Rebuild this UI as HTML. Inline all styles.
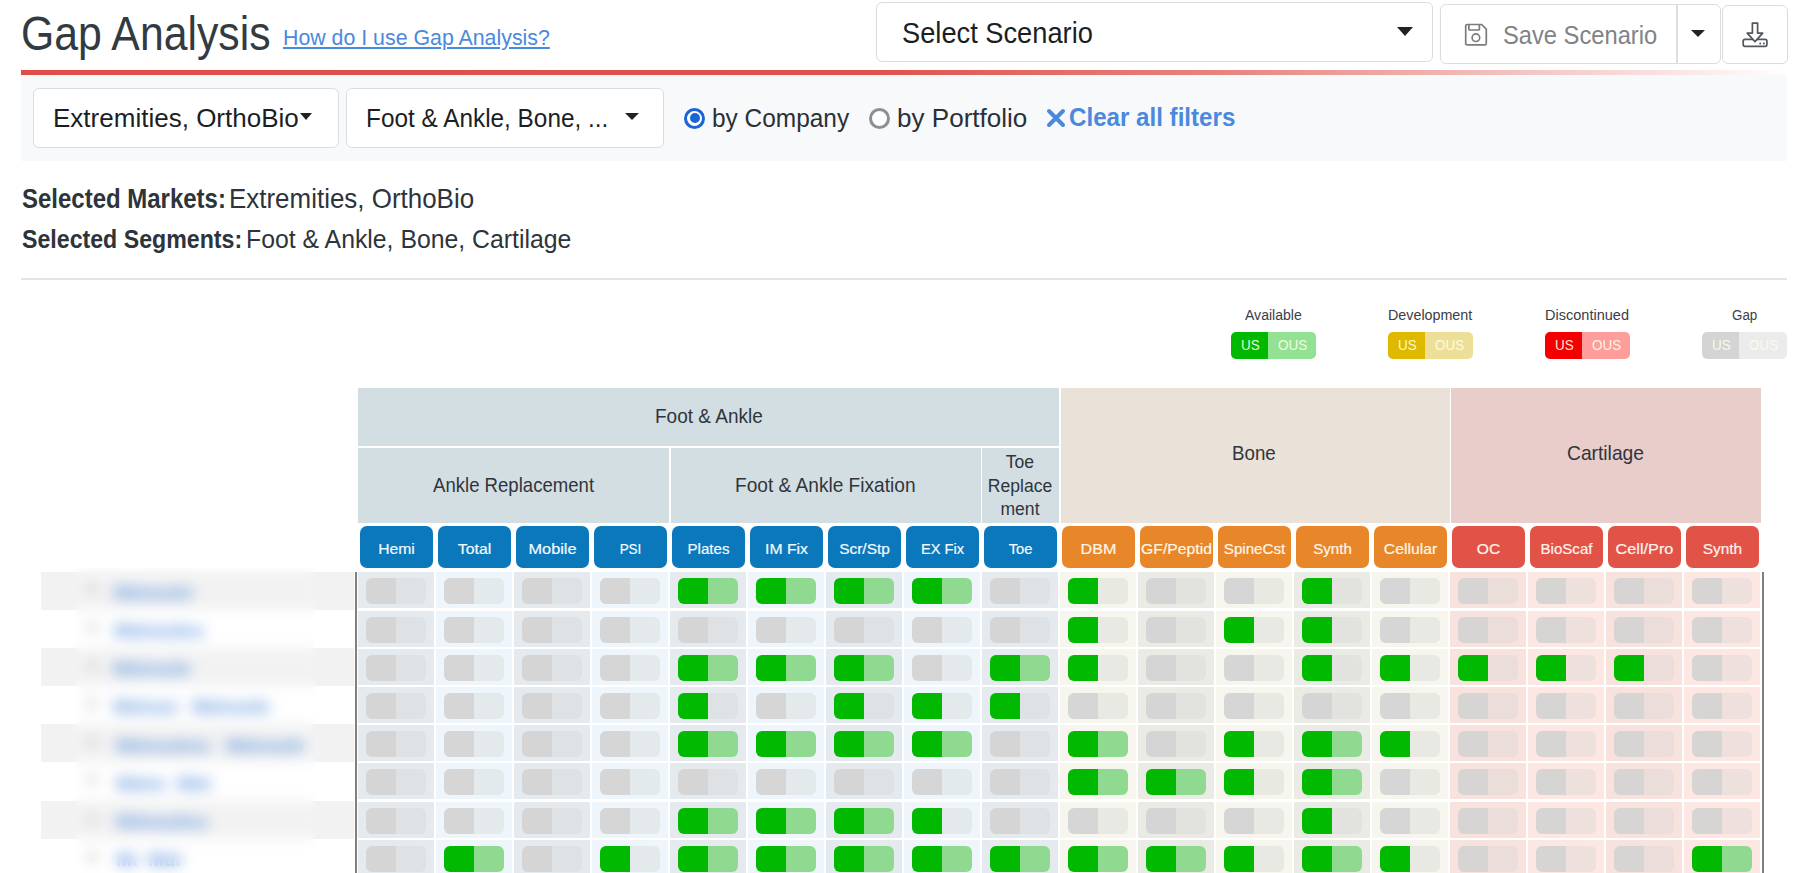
<!DOCTYPE html>
<html><head><meta charset="utf-8">
<style>
*{margin:0;padding:0;box-sizing:border-box}
html,body{width:1800px;height:873px;overflow:hidden;background:#fff}
body{font-family:"Liberation Sans",sans-serif;color:#212529;position:relative}
.a{position:absolute;white-space:nowrap;transform-origin:0 0}
.box{position:absolute;background:#fff;border:1.5px solid #dadcde;border-radius:6px}
.caret{position:absolute;width:0;height:0;border-left:7px solid transparent;border-right:7px solid transparent;border-top:7px solid #222}
.radio{position:absolute;width:21px;height:21px;border-radius:50%}
.badge{position:absolute;width:85px;height:27px;border-radius:5px;overflow:hidden}
.badge i{position:absolute;top:0;height:27px;display:block}
.badge b{position:absolute;top:0;font-weight:normal;font-size:14.5px;line-height:27px;color:rgba(250,255,235,.92);transform-origin:0 0}
.hdr{position:absolute}
.pill{position:absolute;height:42px;width:73px;border-radius:7px}
.pl{position:absolute;left:0;width:73px;top:0;text-align:center;color:#fff;font-size:15px;line-height:15px;-webkit-text-stroke:.2px currentColor}
.cell{position:absolute;width:76px;height:36px}
.tg{position:absolute;left:8px;top:6px;width:60px;height:26px;border-radius:6px;overflow:hidden}
.tg i{position:absolute;top:0;height:26px;width:30px;display:block}
.tg i+i{left:30px}
</style></head><body>
<div class="a" id="t_title" style="left:20.50px;top:10.00px;font-size:47.24px;line-height:47.24px;transform:scaleX(0.9055);color:#333b42">Gap Analysis</div>
<div class="a" id="t_help" style="left:283.10px;top:26.82px;font-size:21.95px;line-height:21.95px;transform:scaleX(0.9725);color:#4a89dc;text-decoration:underline;text-underline-offset:2px">How do I use Gap Analysis?</div>
<div class="box" style="left:876px;top:2px;width:557px;height:60px"></div>
<div class="a" id="t_selscen" style="left:902.26px;top:17.74px;font-size:29.36px;line-height:29.36px;transform:scaleX(0.9281);color:#1b1f24">Select Scenario</div>
<div class="caret" style="left:1397px;top:27px;border-left-width:8px;border-right-width:8px;border-top-width:9px"></div>
<div class="box" style="left:1440px;top:4px;width:281px;height:60px"></div>
<div class="a" style="left:1676px;top:5px;width:1.5px;height:58px;background:#dcdfe3"></div>
<svg class="a" style="left:1463px;top:22px" width="26" height="26" viewBox="0 0 26 26"><path d="M4.2 2.5H18.6L23.3 7.2V21.4a1.5 1.5 0 0 1-1.5 1.5H4.2a1.5 1.5 0 0 1-1.5-1.5V4a1.5 1.5 0 0 1 1.5-1.5z" fill="none" stroke="#7b7b7b" stroke-width="1.7" stroke-linejoin="round"/><path d="M5.9 2.5V7.2a.8.8 0 0 0 .8.8H15.6a.8.8 0 0 0 .8-.8V2.5" fill="none" stroke="#7b7b7b" stroke-width="1.7"/><circle cx="12.9" cy="15.7" r="3.8" fill="none" stroke="#7b7b7b" stroke-width="1.6"/></svg>
<div class="a" id="t_savescen" style="left:1503.18px;top:21.87px;font-size:26.02px;line-height:26.02px;transform:scaleX(0.9113);color:#808386">Save Scenario</div>
<div class="caret" style="left:1691px;top:30px"></div>
<div class="box" style="left:1722px;top:5px;width:66px;height:59px"></div>
<svg class="a" style="left:1741px;top:21px" width="28" height="28" viewBox="0 0 28 28"><rect x="2.2" y="18.3" width="23.7" height="7" rx="1.8" fill="none" stroke="#52575c" stroke-width="1.7"/><path d="M11.4 2.1H16.6V12.1H21.7L14 20.6L6.2 12.1H11.4Z" fill="#fff" stroke="#52575c" stroke-width="1.7" stroke-linejoin="round"/><circle cx="19.2" cy="22.4" r="1" fill="#52575c"/><circle cx="22.9" cy="22.4" r="1" fill="#52575c"/></svg>
<div class="a" style="left:21px;top:69.5px;width:1766px;height:5.5px;background:linear-gradient(90deg,#df4f47 0%,#e0524b 48%,#e8837e 68%,#f1b9b7 82%,#f9e2e1 93%,rgba(255,255,255,0) 100%)"></div>
<div class="a" style="left:21px;top:75px;width:1766px;height:86px;background:#f8f9fa"></div>
<div class="box" style="left:33px;top:88px;width:306px;height:60px"></div>
<div class="a" id="t_dd1" style="left:53.40px;top:104.83px;font-size:26.31px;line-height:26.31px;transform:scaleX(0.9894);color:#1b1f24">Extremities, OrthoBio</div>
<div class="caret" style="left:300px;top:113px;border-left-width:6.7px;border-right-width:6.7px"></div>
<div class="box" style="left:346px;top:88px;width:318px;height:60px"></div>
<div class="a" id="t_dd2" style="left:366.46px;top:104.80px;font-size:26.45px;line-height:26.45px;transform:scaleX(0.9212);color:#1b1f24">Foot &amp; Ankle, Bone, ...</div>
<div class="caret" style="left:625px;top:113px"></div>
<div class="radio" style="left:684px;top:107.5px;border:3px solid #1a63d8;background:#fff"><div style="position:absolute;left:2.5px;top:2.5px;width:10px;height:10px;border-radius:50%;background:#1a63d8"></div></div>
<div class="a" id="t_bycomp" style="left:712.26px;top:104.85px;font-size:26.16px;line-height:26.16px;transform:scaleX(0.9341);color:#2a3038">by Company</div>
<div class="radio" style="left:869px;top:107.5px;border:3px solid #8d8f92;background:#fff"></div>
<div class="a" id="t_byport" style="left:897.28px;top:104.85px;font-size:26.16px;line-height:26.16px;transform:scaleX(0.9963);color:#2a3038">by Portfolio</div>
<svg class="a" style="left:1046px;top:108px" width="20" height="20" viewBox="0 0 20 20"><path d="M3 3L17 17M17 3L3 17" stroke="#4a89dc" stroke-width="4" stroke-linecap="round"/></svg>
<div class="a" id="t_clear" style="left:1069.20px;top:105.24px;font-size:25.58px;line-height:25.58px;transform:scaleX(0.9436);color:#4a89dc;font-weight:bold">Clear all filters</div>
<div class="a" id="t_selmk" style="left:21.94px;top:185.73px;font-size:26.89px;line-height:26.89px;transform:scaleX(0.8923);color:#2d343a;font-weight:bold">Selected Markets:</div>
<div class="a" id="t_selsg" style="left:21.94px;top:227.09px;font-size:25.87px;line-height:25.87px;transform:scaleX(0.8957);color:#2d343a;font-weight:bold">Selected Segments:</div>
<div class="a" id="t_selmk2" style="left:229.38px;top:185.73px;font-size:26.89px;line-height:26.89px;transform:scaleX(0.9653);color:#2d343a">Extremities, OrthoBio</div>
<div class="a" id="t_selsg2" style="left:245.72px;top:227.09px;font-size:25.87px;line-height:25.87px;transform:scaleX(0.9591);color:#2d343a">Foot &amp; Ankle, Bone, Cartilage</div>
<div class="a" style="left:21px;top:278px;width:1766px;height:2px;background:#e3e3e3"></div>
<div class="a" id="t_lg0" style="left:1245.02px;top:308.99px;font-size:13.95px;line-height:13.95px;transform:scaleX(1.0078);color:#3a4047">Available</div>
<div class="badge" style="left:1231px;top:332px"><i style="left:0;width:37px;background:#00b900"></i><i style="left:37px;width:48px;background:#93e293"></i><b style="left:10px;transform:scaleX(.93)">US</b><b style="left:47px;transform:scaleX(.93)">OUS</b></div>
<div class="a" id="t_lg1" style="left:1388.20px;top:308.99px;font-size:13.95px;line-height:13.95px;transform:scaleX(1.0258);color:#3a4047">Development</div>
<div class="badge" style="left:1388px;top:332px"><i style="left:0;width:37px;background:#dfb900"></i><i style="left:37px;width:48px;background:#eedf98"></i><b style="left:10px;transform:scaleX(.93)">US</b><b style="left:47px;transform:scaleX(.93)">OUS</b></div>
<div class="a" id="t_lg2" style="left:1545.30px;top:308.99px;font-size:13.95px;line-height:13.95px;transform:scaleX(1.0421);color:#3a4047">Discontinued</div>
<div class="badge" style="left:1545px;top:332px"><i style="left:0;width:37px;background:#f50000"></i><i style="left:37px;width:48px;background:#ff9c9c"></i><b style="left:10px;transform:scaleX(.93)">US</b><b style="left:47px;transform:scaleX(.93)">OUS</b></div>
<div class="a" id="t_lg3" style="left:1732.10px;top:308.99px;font-size:13.95px;line-height:13.95px;transform:scaleX(0.9577);color:#3a4047">Gap</div>
<div class="badge" style="left:1702px;top:332px"><i style="left:0;width:37px;background:#d4d4d4"></i><i style="left:37px;width:48px;background:#ebebeb"></i><b style="left:10px;transform:scaleX(.93)">US</b><b style="left:47px;transform:scaleX(.93)">OUS</b></div>
<div class="hdr" style="left:358px;top:387.5px;width:701px;height:58.5px;background:#d3dee3"></div>
<div class="hdr" style="left:358px;top:448px;width:310.5px;height:74.5px;background:#d3dee3"></div>
<div class="hdr" style="left:670.5px;top:448px;width:310.5px;height:74.5px;background:#d3dee3"></div>
<div class="hdr" style="left:982px;top:448px;width:77px;height:74.5px;background:#d3dee3"></div>
<div class="hdr" style="left:1060.5px;top:387.5px;width:389.1px;height:135px;background:#eae1d9"></div>
<div class="hdr" style="left:1451px;top:387.5px;width:310.3px;height:135px;background:#e8cdcb"></div>
<div class="a" id="t_h_fa" style="left:655.20px;top:407.16px;font-size:19.77px;line-height:19.77px;transform:scaleX(0.9619);color:#2f353b">Foot &amp; Ankle</div>
<div class="a" id="t_h_ar" style="left:433.06px;top:476.09px;font-size:19.62px;line-height:19.62px;transform:scaleX(0.9471);color:#2f353b">Ankle Replacement</div>
<div class="a" id="t_h_faf" style="left:735.32px;top:476.09px;font-size:19.62px;line-height:19.62px;transform:scaleX(0.9742);color:#2f353b">Foot &amp; Ankle Fixation</div>
<div class="a" id="t_h_bone" style="left:1232.34px;top:444.39px;font-size:19.62px;line-height:19.62px;transform:scaleX(0.9545);color:#2f353b">Bone</div>
<div class="a" id="t_h_cart" style="left:1567.24px;top:444.39px;font-size:19.62px;line-height:19.62px;transform:scaleX(0.9810);color:#2f353b">Cartilage</div>
<div class="a" style="left:982px;width:76px;text-align:center;top:452.7px;font-size:18.3px;line-height:18.3px;color:#2f353b;transform:scaleX(.96);transform-origin:38px 0">Toe</div>
<div class="a" style="left:982px;width:76px;text-align:center;top:476.8px;font-size:18.3px;line-height:18.3px;color:#2f353b;transform:scaleX(.96);transform-origin:38px 0">Replace</div>
<div class="a" style="left:982px;width:76px;text-align:center;top:500.3px;font-size:18.3px;line-height:18.3px;color:#2f353b;transform:scaleX(.96);transform-origin:38px 0">ment</div>
<div class="pill" style="left:360px;top:526px;background:#0c78bc"><div class="pl" style="top:14.5px;transform:scaleX(1.048);transform-origin:36.5px 0;color:#f4fbff">Hemi</div></div>
<div class="pill" style="left:438px;top:526px;background:#0c78bc"><div class="pl" style="top:14.5px;transform:scaleX(1.053);transform-origin:36.5px 0;color:#f4fbff">Total</div></div>
<div class="pill" style="left:516px;top:526px;background:#0c78bc"><div class="pl" style="top:14.5px;transform:scaleX(1.088);transform-origin:36.5px 0;color:#f4fbff">Mobile</div></div>
<div class="pill" style="left:594px;top:526px;background:#0c78bc"><div class="pl" style="top:14.5px;transform:scaleX(0.898);transform-origin:36.5px 0;color:#f4fbff">PSI</div></div>
<div class="pill" style="left:672px;top:526px;background:#0c78bc"><div class="pl" style="top:14.5px;transform:scaleX(1.005);transform-origin:36.5px 0;color:#f4fbff">Plates</div></div>
<div class="pill" style="left:750px;top:526px;background:#0c78bc"><div class="pl" style="top:14.5px;transform:scaleX(1.049);transform-origin:36.5px 0;color:#f4fbff">IM Fix</div></div>
<div class="pill" style="left:828px;top:526px;background:#0c78bc"><div class="pl" style="top:14.5px;transform:scaleX(1.028);transform-origin:36.5px 0;color:#f4fbff">Scr/Stp</div></div>
<div class="pill" style="left:906px;top:526px;background:#0c78bc"><div class="pl" style="top:14.5px;transform:scaleX(0.973);transform-origin:36.5px 0;color:#f4fbff">EX Fix</div></div>
<div class="pill" style="left:984px;top:526px;background:#0c78bc"><div class="pl" style="top:14.5px;transform:scaleX(0.980);transform-origin:36.5px 0;color:#f4fbff">Toe</div></div>
<div class="pill" style="left:1062px;top:526px;background:#e8862a"><div class="pl" style="top:14.5px;transform:scaleX(1.074);transform-origin:36.5px 0;color:#fff6e8">DBM</div></div>
<div class="pill" style="left:1140px;top:526px;background:#e8862a"><div class="pl" style="top:14.5px;transform:scaleX(1.049);transform-origin:36.5px 0;color:#fff6e8">GF/Peptid</div></div>
<div class="pill" style="left:1218px;top:526px;background:#e8862a"><div class="pl" style="top:14.5px;transform:scaleX(1.007);transform-origin:36.5px 0;color:#fff6e8">SpineCst</div></div>
<div class="pill" style="left:1296px;top:526px;background:#e8862a"><div class="pl" style="top:14.5px;transform:scaleX(1.005);transform-origin:36.5px 0;color:#fff6e8">Synth</div></div>
<div class="pill" style="left:1374px;top:526px;background:#e8862a"><div class="pl" style="top:14.5px;transform:scaleX(1.049);transform-origin:36.5px 0;color:#fff6e8">Cellular</div></div>
<div class="pill" style="left:1452px;top:526px;background:#e05346"><div class="pl" style="top:14.5px;transform:scaleX(1.039);transform-origin:36.5px 0;color:#fff2ee">OC</div></div>
<div class="pill" style="left:1530px;top:526px;background:#e05346"><div class="pl" style="top:14.5px;transform:scaleX(1.004);transform-origin:36.5px 0;color:#fff2ee">BioScaf</div></div>
<div class="pill" style="left:1608px;top:526px;background:#e05346"><div class="pl" style="top:14.5px;transform:scaleX(1.082);transform-origin:36.5px 0;color:#fff2ee">Cell/Pro</div></div>
<div class="pill" style="left:1686px;top:526px;background:#e05346"><div class="pl" style="top:14.5px;transform:scaleX(1.026);transform-origin:36.5px 0;color:#fff2ee">Synth</div></div>
<div class="a" style="left:41px;top:571.5px;width:313px;height:38.2px;background:#f2f2f2"></div>
<div class="cell" style="left:358px;top:572.3px;background:#e5eaef"><div class="tg"><i style="background:rgba(211,211,211,.9)"></i><i style="background:rgba(212,212,212,.38)"></i></div></div>
<div class="cell" style="left:436px;top:572.3px;background:#eef5fb"><div class="tg"><i style="background:rgba(211,211,211,.9)"></i><i style="background:rgba(212,212,212,.38)"></i></div></div>
<div class="cell" style="left:514px;top:572.3px;background:#e5eaef"><div class="tg"><i style="background:rgba(211,211,211,.9)"></i><i style="background:rgba(212,212,212,.38)"></i></div></div>
<div class="cell" style="left:592px;top:572.3px;background:#eef5fb"><div class="tg"><i style="background:rgba(211,211,211,.9)"></i><i style="background:rgba(212,212,212,.38)"></i></div></div>
<div class="cell" style="left:670px;top:572.3px;background:#e5eaef"><div class="tg"><i style="background:#00b900"></i><i style="background:#90d990"></i></div></div>
<div class="cell" style="left:748px;top:572.3px;background:#eef5fb"><div class="tg"><i style="background:#00b900"></i><i style="background:#90d990"></i></div></div>
<div class="cell" style="left:826px;top:572.3px;background:#e5eaef"><div class="tg"><i style="background:#00b900"></i><i style="background:#90d990"></i></div></div>
<div class="cell" style="left:904px;top:572.3px;background:#eef5fb"><div class="tg"><i style="background:#00b900"></i><i style="background:#90d990"></i></div></div>
<div class="cell" style="left:982px;top:572.3px;background:#e5eaef"><div class="tg"><i style="background:rgba(211,211,211,.9)"></i><i style="background:rgba(212,212,212,.38)"></i></div></div>
<div class="cell" style="left:1060px;top:572.3px;background:#f6f6ee"><div class="tg"><i style="background:#00b900"></i><i style="background:rgba(212,212,212,.38)"></i></div></div>
<div class="cell" style="left:1138px;top:572.3px;background:#ebebe5"><div class="tg"><i style="background:rgba(211,211,211,.9)"></i><i style="background:rgba(212,212,212,.38)"></i></div></div>
<div class="cell" style="left:1216px;top:572.3px;background:#f6f6ee"><div class="tg"><i style="background:rgba(211,211,211,.9)"></i><i style="background:rgba(212,212,212,.38)"></i></div></div>
<div class="cell" style="left:1294px;top:572.3px;background:#ebebe5"><div class="tg"><i style="background:#00b900"></i><i style="background:rgba(212,212,212,.38)"></i></div></div>
<div class="cell" style="left:1372px;top:572.3px;background:#f6f6ee"><div class="tg"><i style="background:rgba(211,211,211,.9)"></i><i style="background:rgba(212,212,212,.38)"></i></div></div>
<div class="cell" style="left:1450px;top:572.3px;background:#f8e2de"><div class="tg"><i style="background:rgba(211,211,211,.9)"></i><i style="background:rgba(212,212,212,.38)"></i></div></div>
<div class="cell" style="left:1528px;top:572.3px;background:#fde7e2"><div class="tg"><i style="background:rgba(211,211,211,.9)"></i><i style="background:rgba(212,212,212,.38)"></i></div></div>
<div class="cell" style="left:1606px;top:572.3px;background:#f8e2de"><div class="tg"><i style="background:rgba(211,211,211,.9)"></i><i style="background:rgba(212,212,212,.38)"></i></div></div>
<div class="cell" style="left:1684px;top:572.3px;background:#fde7e2"><div class="tg"><i style="background:rgba(211,211,211,.9)"></i><i style="background:rgba(212,212,212,.38)"></i></div></div>
<div class="cell" style="left:358px;top:610.5px;background:#e5eaef"><div class="tg"><i style="background:rgba(211,211,211,.9)"></i><i style="background:rgba(212,212,212,.38)"></i></div></div>
<div class="cell" style="left:436px;top:610.5px;background:#eef5fb"><div class="tg"><i style="background:rgba(211,211,211,.9)"></i><i style="background:rgba(212,212,212,.38)"></i></div></div>
<div class="cell" style="left:514px;top:610.5px;background:#e5eaef"><div class="tg"><i style="background:rgba(211,211,211,.9)"></i><i style="background:rgba(212,212,212,.38)"></i></div></div>
<div class="cell" style="left:592px;top:610.5px;background:#eef5fb"><div class="tg"><i style="background:rgba(211,211,211,.9)"></i><i style="background:rgba(212,212,212,.38)"></i></div></div>
<div class="cell" style="left:670px;top:610.5px;background:#e5eaef"><div class="tg"><i style="background:rgba(211,211,211,.9)"></i><i style="background:rgba(212,212,212,.38)"></i></div></div>
<div class="cell" style="left:748px;top:610.5px;background:#eef5fb"><div class="tg"><i style="background:rgba(211,211,211,.9)"></i><i style="background:rgba(212,212,212,.38)"></i></div></div>
<div class="cell" style="left:826px;top:610.5px;background:#e5eaef"><div class="tg"><i style="background:rgba(211,211,211,.9)"></i><i style="background:rgba(212,212,212,.38)"></i></div></div>
<div class="cell" style="left:904px;top:610.5px;background:#eef5fb"><div class="tg"><i style="background:rgba(211,211,211,.9)"></i><i style="background:rgba(212,212,212,.38)"></i></div></div>
<div class="cell" style="left:982px;top:610.5px;background:#e5eaef"><div class="tg"><i style="background:rgba(211,211,211,.9)"></i><i style="background:rgba(212,212,212,.38)"></i></div></div>
<div class="cell" style="left:1060px;top:610.5px;background:#f6f6ee"><div class="tg"><i style="background:#00b900"></i><i style="background:rgba(212,212,212,.38)"></i></div></div>
<div class="cell" style="left:1138px;top:610.5px;background:#ebebe5"><div class="tg"><i style="background:rgba(211,211,211,.9)"></i><i style="background:rgba(212,212,212,.38)"></i></div></div>
<div class="cell" style="left:1216px;top:610.5px;background:#f6f6ee"><div class="tg"><i style="background:#00b900"></i><i style="background:rgba(212,212,212,.38)"></i></div></div>
<div class="cell" style="left:1294px;top:610.5px;background:#ebebe5"><div class="tg"><i style="background:#00b900"></i><i style="background:rgba(212,212,212,.38)"></i></div></div>
<div class="cell" style="left:1372px;top:610.5px;background:#f6f6ee"><div class="tg"><i style="background:rgba(211,211,211,.9)"></i><i style="background:rgba(212,212,212,.38)"></i></div></div>
<div class="cell" style="left:1450px;top:610.5px;background:#f8e2de"><div class="tg"><i style="background:rgba(211,211,211,.9)"></i><i style="background:rgba(212,212,212,.38)"></i></div></div>
<div class="cell" style="left:1528px;top:610.5px;background:#fde7e2"><div class="tg"><i style="background:rgba(211,211,211,.9)"></i><i style="background:rgba(212,212,212,.38)"></i></div></div>
<div class="cell" style="left:1606px;top:610.5px;background:#f8e2de"><div class="tg"><i style="background:rgba(211,211,211,.9)"></i><i style="background:rgba(212,212,212,.38)"></i></div></div>
<div class="cell" style="left:1684px;top:610.5px;background:#fde7e2"><div class="tg"><i style="background:rgba(211,211,211,.9)"></i><i style="background:rgba(212,212,212,.38)"></i></div></div>
<div class="a" style="left:41px;top:647.9px;width:313px;height:38.2px;background:#f2f2f2"></div>
<div class="cell" style="left:358px;top:648.7px;background:#e5eaef"><div class="tg"><i style="background:rgba(211,211,211,.9)"></i><i style="background:rgba(212,212,212,.38)"></i></div></div>
<div class="cell" style="left:436px;top:648.7px;background:#eef5fb"><div class="tg"><i style="background:rgba(211,211,211,.9)"></i><i style="background:rgba(212,212,212,.38)"></i></div></div>
<div class="cell" style="left:514px;top:648.7px;background:#e5eaef"><div class="tg"><i style="background:rgba(211,211,211,.9)"></i><i style="background:rgba(212,212,212,.38)"></i></div></div>
<div class="cell" style="left:592px;top:648.7px;background:#eef5fb"><div class="tg"><i style="background:rgba(211,211,211,.9)"></i><i style="background:rgba(212,212,212,.38)"></i></div></div>
<div class="cell" style="left:670px;top:648.7px;background:#e5eaef"><div class="tg"><i style="background:#00b900"></i><i style="background:#90d990"></i></div></div>
<div class="cell" style="left:748px;top:648.7px;background:#eef5fb"><div class="tg"><i style="background:#00b900"></i><i style="background:#90d990"></i></div></div>
<div class="cell" style="left:826px;top:648.7px;background:#e5eaef"><div class="tg"><i style="background:#00b900"></i><i style="background:#90d990"></i></div></div>
<div class="cell" style="left:904px;top:648.7px;background:#eef5fb"><div class="tg"><i style="background:rgba(211,211,211,.9)"></i><i style="background:rgba(212,212,212,.38)"></i></div></div>
<div class="cell" style="left:982px;top:648.7px;background:#e5eaef"><div class="tg"><i style="background:#00b900"></i><i style="background:#90d990"></i></div></div>
<div class="cell" style="left:1060px;top:648.7px;background:#f6f6ee"><div class="tg"><i style="background:#00b900"></i><i style="background:rgba(212,212,212,.38)"></i></div></div>
<div class="cell" style="left:1138px;top:648.7px;background:#ebebe5"><div class="tg"><i style="background:rgba(211,211,211,.9)"></i><i style="background:rgba(212,212,212,.38)"></i></div></div>
<div class="cell" style="left:1216px;top:648.7px;background:#f6f6ee"><div class="tg"><i style="background:rgba(211,211,211,.9)"></i><i style="background:rgba(212,212,212,.38)"></i></div></div>
<div class="cell" style="left:1294px;top:648.7px;background:#ebebe5"><div class="tg"><i style="background:#00b900"></i><i style="background:rgba(212,212,212,.38)"></i></div></div>
<div class="cell" style="left:1372px;top:648.7px;background:#f6f6ee"><div class="tg"><i style="background:#00b900"></i><i style="background:rgba(212,212,212,.38)"></i></div></div>
<div class="cell" style="left:1450px;top:648.7px;background:#f8e2de"><div class="tg"><i style="background:#00b900"></i><i style="background:rgba(212,212,212,.38)"></i></div></div>
<div class="cell" style="left:1528px;top:648.7px;background:#fde7e2"><div class="tg"><i style="background:#00b900"></i><i style="background:rgba(212,212,212,.38)"></i></div></div>
<div class="cell" style="left:1606px;top:648.7px;background:#f8e2de"><div class="tg"><i style="background:#00b900"></i><i style="background:rgba(212,212,212,.38)"></i></div></div>
<div class="cell" style="left:1684px;top:648.7px;background:#fde7e2"><div class="tg"><i style="background:rgba(211,211,211,.9)"></i><i style="background:rgba(212,212,212,.38)"></i></div></div>
<div class="cell" style="left:358px;top:686.9px;background:#e5eaef"><div class="tg"><i style="background:rgba(211,211,211,.9)"></i><i style="background:rgba(212,212,212,.38)"></i></div></div>
<div class="cell" style="left:436px;top:686.9px;background:#eef5fb"><div class="tg"><i style="background:rgba(211,211,211,.9)"></i><i style="background:rgba(212,212,212,.38)"></i></div></div>
<div class="cell" style="left:514px;top:686.9px;background:#e5eaef"><div class="tg"><i style="background:rgba(211,211,211,.9)"></i><i style="background:rgba(212,212,212,.38)"></i></div></div>
<div class="cell" style="left:592px;top:686.9px;background:#eef5fb"><div class="tg"><i style="background:rgba(211,211,211,.9)"></i><i style="background:rgba(212,212,212,.38)"></i></div></div>
<div class="cell" style="left:670px;top:686.9px;background:#e5eaef"><div class="tg"><i style="background:#00b900"></i><i style="background:rgba(212,212,212,.38)"></i></div></div>
<div class="cell" style="left:748px;top:686.9px;background:#eef5fb"><div class="tg"><i style="background:rgba(211,211,211,.9)"></i><i style="background:rgba(212,212,212,.38)"></i></div></div>
<div class="cell" style="left:826px;top:686.9px;background:#e5eaef"><div class="tg"><i style="background:#00b900"></i><i style="background:rgba(212,212,212,.38)"></i></div></div>
<div class="cell" style="left:904px;top:686.9px;background:#eef5fb"><div class="tg"><i style="background:#00b900"></i><i style="background:rgba(212,212,212,.38)"></i></div></div>
<div class="cell" style="left:982px;top:686.9px;background:#e5eaef"><div class="tg"><i style="background:#00b900"></i><i style="background:rgba(212,212,212,.38)"></i></div></div>
<div class="cell" style="left:1060px;top:686.9px;background:#f6f6ee"><div class="tg"><i style="background:rgba(211,211,211,.9)"></i><i style="background:rgba(212,212,212,.38)"></i></div></div>
<div class="cell" style="left:1138px;top:686.9px;background:#ebebe5"><div class="tg"><i style="background:rgba(211,211,211,.9)"></i><i style="background:rgba(212,212,212,.38)"></i></div></div>
<div class="cell" style="left:1216px;top:686.9px;background:#f6f6ee"><div class="tg"><i style="background:rgba(211,211,211,.9)"></i><i style="background:rgba(212,212,212,.38)"></i></div></div>
<div class="cell" style="left:1294px;top:686.9px;background:#ebebe5"><div class="tg"><i style="background:rgba(211,211,211,.9)"></i><i style="background:rgba(212,212,212,.38)"></i></div></div>
<div class="cell" style="left:1372px;top:686.9px;background:#f6f6ee"><div class="tg"><i style="background:rgba(211,211,211,.9)"></i><i style="background:rgba(212,212,212,.38)"></i></div></div>
<div class="cell" style="left:1450px;top:686.9px;background:#f8e2de"><div class="tg"><i style="background:rgba(211,211,211,.9)"></i><i style="background:rgba(212,212,212,.38)"></i></div></div>
<div class="cell" style="left:1528px;top:686.9px;background:#fde7e2"><div class="tg"><i style="background:rgba(211,211,211,.9)"></i><i style="background:rgba(212,212,212,.38)"></i></div></div>
<div class="cell" style="left:1606px;top:686.9px;background:#f8e2de"><div class="tg"><i style="background:rgba(211,211,211,.9)"></i><i style="background:rgba(212,212,212,.38)"></i></div></div>
<div class="cell" style="left:1684px;top:686.9px;background:#fde7e2"><div class="tg"><i style="background:rgba(211,211,211,.9)"></i><i style="background:rgba(212,212,212,.38)"></i></div></div>
<div class="a" style="left:41px;top:724.3px;width:313px;height:38.2px;background:#f2f2f2"></div>
<div class="cell" style="left:358px;top:725.1px;background:#e5eaef"><div class="tg"><i style="background:rgba(211,211,211,.9)"></i><i style="background:rgba(212,212,212,.38)"></i></div></div>
<div class="cell" style="left:436px;top:725.1px;background:#eef5fb"><div class="tg"><i style="background:rgba(211,211,211,.9)"></i><i style="background:rgba(212,212,212,.38)"></i></div></div>
<div class="cell" style="left:514px;top:725.1px;background:#e5eaef"><div class="tg"><i style="background:rgba(211,211,211,.9)"></i><i style="background:rgba(212,212,212,.38)"></i></div></div>
<div class="cell" style="left:592px;top:725.1px;background:#eef5fb"><div class="tg"><i style="background:rgba(211,211,211,.9)"></i><i style="background:rgba(212,212,212,.38)"></i></div></div>
<div class="cell" style="left:670px;top:725.1px;background:#e5eaef"><div class="tg"><i style="background:#00b900"></i><i style="background:#90d990"></i></div></div>
<div class="cell" style="left:748px;top:725.1px;background:#eef5fb"><div class="tg"><i style="background:#00b900"></i><i style="background:#90d990"></i></div></div>
<div class="cell" style="left:826px;top:725.1px;background:#e5eaef"><div class="tg"><i style="background:#00b900"></i><i style="background:#90d990"></i></div></div>
<div class="cell" style="left:904px;top:725.1px;background:#eef5fb"><div class="tg"><i style="background:#00b900"></i><i style="background:#90d990"></i></div></div>
<div class="cell" style="left:982px;top:725.1px;background:#e5eaef"><div class="tg"><i style="background:rgba(211,211,211,.9)"></i><i style="background:rgba(212,212,212,.38)"></i></div></div>
<div class="cell" style="left:1060px;top:725.1px;background:#f6f6ee"><div class="tg"><i style="background:#00b900"></i><i style="background:#90d990"></i></div></div>
<div class="cell" style="left:1138px;top:725.1px;background:#ebebe5"><div class="tg"><i style="background:rgba(211,211,211,.9)"></i><i style="background:rgba(212,212,212,.38)"></i></div></div>
<div class="cell" style="left:1216px;top:725.1px;background:#f6f6ee"><div class="tg"><i style="background:#00b900"></i><i style="background:rgba(212,212,212,.38)"></i></div></div>
<div class="cell" style="left:1294px;top:725.1px;background:#ebebe5"><div class="tg"><i style="background:#00b900"></i><i style="background:#90d990"></i></div></div>
<div class="cell" style="left:1372px;top:725.1px;background:#f6f6ee"><div class="tg"><i style="background:#00b900"></i><i style="background:rgba(212,212,212,.38)"></i></div></div>
<div class="cell" style="left:1450px;top:725.1px;background:#f8e2de"><div class="tg"><i style="background:rgba(211,211,211,.9)"></i><i style="background:rgba(212,212,212,.38)"></i></div></div>
<div class="cell" style="left:1528px;top:725.1px;background:#fde7e2"><div class="tg"><i style="background:rgba(211,211,211,.9)"></i><i style="background:rgba(212,212,212,.38)"></i></div></div>
<div class="cell" style="left:1606px;top:725.1px;background:#f8e2de"><div class="tg"><i style="background:rgba(211,211,211,.9)"></i><i style="background:rgba(212,212,212,.38)"></i></div></div>
<div class="cell" style="left:1684px;top:725.1px;background:#fde7e2"><div class="tg"><i style="background:rgba(211,211,211,.9)"></i><i style="background:rgba(212,212,212,.38)"></i></div></div>
<div class="cell" style="left:358px;top:763.3px;background:#e5eaef"><div class="tg"><i style="background:rgba(211,211,211,.9)"></i><i style="background:rgba(212,212,212,.38)"></i></div></div>
<div class="cell" style="left:436px;top:763.3px;background:#eef5fb"><div class="tg"><i style="background:rgba(211,211,211,.9)"></i><i style="background:rgba(212,212,212,.38)"></i></div></div>
<div class="cell" style="left:514px;top:763.3px;background:#e5eaef"><div class="tg"><i style="background:rgba(211,211,211,.9)"></i><i style="background:rgba(212,212,212,.38)"></i></div></div>
<div class="cell" style="left:592px;top:763.3px;background:#eef5fb"><div class="tg"><i style="background:rgba(211,211,211,.9)"></i><i style="background:rgba(212,212,212,.38)"></i></div></div>
<div class="cell" style="left:670px;top:763.3px;background:#e5eaef"><div class="tg"><i style="background:rgba(211,211,211,.9)"></i><i style="background:rgba(212,212,212,.38)"></i></div></div>
<div class="cell" style="left:748px;top:763.3px;background:#eef5fb"><div class="tg"><i style="background:rgba(211,211,211,.9)"></i><i style="background:rgba(212,212,212,.38)"></i></div></div>
<div class="cell" style="left:826px;top:763.3px;background:#e5eaef"><div class="tg"><i style="background:rgba(211,211,211,.9)"></i><i style="background:rgba(212,212,212,.38)"></i></div></div>
<div class="cell" style="left:904px;top:763.3px;background:#eef5fb"><div class="tg"><i style="background:rgba(211,211,211,.9)"></i><i style="background:rgba(212,212,212,.38)"></i></div></div>
<div class="cell" style="left:982px;top:763.3px;background:#e5eaef"><div class="tg"><i style="background:rgba(211,211,211,.9)"></i><i style="background:rgba(212,212,212,.38)"></i></div></div>
<div class="cell" style="left:1060px;top:763.3px;background:#f6f6ee"><div class="tg"><i style="background:#00b900"></i><i style="background:#90d990"></i></div></div>
<div class="cell" style="left:1138px;top:763.3px;background:#ebebe5"><div class="tg"><i style="background:#00b900"></i><i style="background:#90d990"></i></div></div>
<div class="cell" style="left:1216px;top:763.3px;background:#f6f6ee"><div class="tg"><i style="background:#00b900"></i><i style="background:rgba(212,212,212,.38)"></i></div></div>
<div class="cell" style="left:1294px;top:763.3px;background:#ebebe5"><div class="tg"><i style="background:#00b900"></i><i style="background:#90d990"></i></div></div>
<div class="cell" style="left:1372px;top:763.3px;background:#f6f6ee"><div class="tg"><i style="background:rgba(211,211,211,.9)"></i><i style="background:rgba(212,212,212,.38)"></i></div></div>
<div class="cell" style="left:1450px;top:763.3px;background:#f8e2de"><div class="tg"><i style="background:rgba(211,211,211,.9)"></i><i style="background:rgba(212,212,212,.38)"></i></div></div>
<div class="cell" style="left:1528px;top:763.3px;background:#fde7e2"><div class="tg"><i style="background:rgba(211,211,211,.9)"></i><i style="background:rgba(212,212,212,.38)"></i></div></div>
<div class="cell" style="left:1606px;top:763.3px;background:#f8e2de"><div class="tg"><i style="background:rgba(211,211,211,.9)"></i><i style="background:rgba(212,212,212,.38)"></i></div></div>
<div class="cell" style="left:1684px;top:763.3px;background:#fde7e2"><div class="tg"><i style="background:rgba(211,211,211,.9)"></i><i style="background:rgba(212,212,212,.38)"></i></div></div>
<div class="a" style="left:41px;top:800.7px;width:313px;height:38.2px;background:#f2f2f2"></div>
<div class="cell" style="left:358px;top:801.5px;background:#e5eaef"><div class="tg"><i style="background:rgba(211,211,211,.9)"></i><i style="background:rgba(212,212,212,.38)"></i></div></div>
<div class="cell" style="left:436px;top:801.5px;background:#eef5fb"><div class="tg"><i style="background:rgba(211,211,211,.9)"></i><i style="background:rgba(212,212,212,.38)"></i></div></div>
<div class="cell" style="left:514px;top:801.5px;background:#e5eaef"><div class="tg"><i style="background:rgba(211,211,211,.9)"></i><i style="background:rgba(212,212,212,.38)"></i></div></div>
<div class="cell" style="left:592px;top:801.5px;background:#eef5fb"><div class="tg"><i style="background:rgba(211,211,211,.9)"></i><i style="background:rgba(212,212,212,.38)"></i></div></div>
<div class="cell" style="left:670px;top:801.5px;background:#e5eaef"><div class="tg"><i style="background:#00b900"></i><i style="background:#90d990"></i></div></div>
<div class="cell" style="left:748px;top:801.5px;background:#eef5fb"><div class="tg"><i style="background:#00b900"></i><i style="background:#90d990"></i></div></div>
<div class="cell" style="left:826px;top:801.5px;background:#e5eaef"><div class="tg"><i style="background:#00b900"></i><i style="background:#90d990"></i></div></div>
<div class="cell" style="left:904px;top:801.5px;background:#eef5fb"><div class="tg"><i style="background:#00b900"></i><i style="background:rgba(212,212,212,.38)"></i></div></div>
<div class="cell" style="left:982px;top:801.5px;background:#e5eaef"><div class="tg"><i style="background:rgba(211,211,211,.9)"></i><i style="background:rgba(212,212,212,.38)"></i></div></div>
<div class="cell" style="left:1060px;top:801.5px;background:#f6f6ee"><div class="tg"><i style="background:rgba(211,211,211,.9)"></i><i style="background:rgba(212,212,212,.38)"></i></div></div>
<div class="cell" style="left:1138px;top:801.5px;background:#ebebe5"><div class="tg"><i style="background:rgba(211,211,211,.9)"></i><i style="background:rgba(212,212,212,.38)"></i></div></div>
<div class="cell" style="left:1216px;top:801.5px;background:#f6f6ee"><div class="tg"><i style="background:rgba(211,211,211,.9)"></i><i style="background:rgba(212,212,212,.38)"></i></div></div>
<div class="cell" style="left:1294px;top:801.5px;background:#ebebe5"><div class="tg"><i style="background:#00b900"></i><i style="background:rgba(212,212,212,.38)"></i></div></div>
<div class="cell" style="left:1372px;top:801.5px;background:#f6f6ee"><div class="tg"><i style="background:rgba(211,211,211,.9)"></i><i style="background:rgba(212,212,212,.38)"></i></div></div>
<div class="cell" style="left:1450px;top:801.5px;background:#f8e2de"><div class="tg"><i style="background:rgba(211,211,211,.9)"></i><i style="background:rgba(212,212,212,.38)"></i></div></div>
<div class="cell" style="left:1528px;top:801.5px;background:#fde7e2"><div class="tg"><i style="background:rgba(211,211,211,.9)"></i><i style="background:rgba(212,212,212,.38)"></i></div></div>
<div class="cell" style="left:1606px;top:801.5px;background:#f8e2de"><div class="tg"><i style="background:rgba(211,211,211,.9)"></i><i style="background:rgba(212,212,212,.38)"></i></div></div>
<div class="cell" style="left:1684px;top:801.5px;background:#fde7e2"><div class="tg"><i style="background:rgba(211,211,211,.9)"></i><i style="background:rgba(212,212,212,.38)"></i></div></div>
<div class="cell" style="left:358px;top:839.7px;background:#e5eaef"><div class="tg"><i style="background:rgba(211,211,211,.9)"></i><i style="background:rgba(212,212,212,.38)"></i></div></div>
<div class="cell" style="left:436px;top:839.7px;background:#eef5fb"><div class="tg"><i style="background:#00b900"></i><i style="background:#90d990"></i></div></div>
<div class="cell" style="left:514px;top:839.7px;background:#e5eaef"><div class="tg"><i style="background:rgba(211,211,211,.9)"></i><i style="background:rgba(212,212,212,.38)"></i></div></div>
<div class="cell" style="left:592px;top:839.7px;background:#eef5fb"><div class="tg"><i style="background:#00b900"></i><i style="background:rgba(212,212,212,.38)"></i></div></div>
<div class="cell" style="left:670px;top:839.7px;background:#e5eaef"><div class="tg"><i style="background:#00b900"></i><i style="background:#90d990"></i></div></div>
<div class="cell" style="left:748px;top:839.7px;background:#eef5fb"><div class="tg"><i style="background:#00b900"></i><i style="background:#90d990"></i></div></div>
<div class="cell" style="left:826px;top:839.7px;background:#e5eaef"><div class="tg"><i style="background:#00b900"></i><i style="background:#90d990"></i></div></div>
<div class="cell" style="left:904px;top:839.7px;background:#eef5fb"><div class="tg"><i style="background:#00b900"></i><i style="background:#90d990"></i></div></div>
<div class="cell" style="left:982px;top:839.7px;background:#e5eaef"><div class="tg"><i style="background:#00b900"></i><i style="background:#90d990"></i></div></div>
<div class="cell" style="left:1060px;top:839.7px;background:#f6f6ee"><div class="tg"><i style="background:#00b900"></i><i style="background:#90d990"></i></div></div>
<div class="cell" style="left:1138px;top:839.7px;background:#ebebe5"><div class="tg"><i style="background:#00b900"></i><i style="background:#90d990"></i></div></div>
<div class="cell" style="left:1216px;top:839.7px;background:#f6f6ee"><div class="tg"><i style="background:#00b900"></i><i style="background:rgba(212,212,212,.38)"></i></div></div>
<div class="cell" style="left:1294px;top:839.7px;background:#ebebe5"><div class="tg"><i style="background:#00b900"></i><i style="background:#90d990"></i></div></div>
<div class="cell" style="left:1372px;top:839.7px;background:#f6f6ee"><div class="tg"><i style="background:#00b900"></i><i style="background:rgba(212,212,212,.38)"></i></div></div>
<div class="cell" style="left:1450px;top:839.7px;background:#f8e2de"><div class="tg"><i style="background:rgba(211,211,211,.9)"></i><i style="background:rgba(212,212,212,.38)"></i></div></div>
<div class="cell" style="left:1528px;top:839.7px;background:#fde7e2"><div class="tg"><i style="background:rgba(211,211,211,.9)"></i><i style="background:rgba(212,212,212,.38)"></i></div></div>
<div class="cell" style="left:1606px;top:839.7px;background:#f8e2de"><div class="tg"><i style="background:rgba(211,211,211,.9)"></i><i style="background:rgba(212,212,212,.38)"></i></div></div>
<div class="cell" style="left:1684px;top:839.7px;background:#fde7e2"><div class="tg"><i style="background:#00b900"></i><i style="background:#90d990"></i></div></div>
<div class="a" style="left:87px;top:584.3px;width:10px;height:10px;border-radius:50%;background:#d0d0d0"></div>
<div class="a" style="left:114px;top:582.8px;font-size:19px;line-height:19px;color:#6a9de0;font-weight:bold;width:80px;overflow:hidden">Mdmedmedmedmedmedmedmed</div>
<div class="a" style="left:87px;top:622.5px;width:10px;height:10px;border-radius:50%;background:#d0d0d0"></div>
<div class="a" style="left:114px;top:621.0px;font-size:19px;line-height:19px;color:#6a9de0;font-weight:bold;width:89px;overflow:hidden">Mdmedmedmedmedmedmedmed</div>
<div class="a" style="left:87px;top:660.7px;width:10px;height:10px;border-radius:50%;background:#d0d0d0"></div>
<div class="a" style="left:113px;top:659.2px;font-size:19px;line-height:19px;color:#6a9de0;font-weight:bold;width:77px;overflow:hidden">Mdmedmedmedmedmedmedmed</div>
<div class="a" style="left:87px;top:698.9px;width:10px;height:10px;border-radius:50%;background:#d0d0d0"></div>
<div class="a" style="left:113px;top:697.4px;font-size:19px;line-height:19px;color:#6a9de0;font-weight:bold;width:64px;overflow:hidden">Mdmedmedmedmedmedmedmed</div>
<div class="a" style="left:192px;top:697.4px;font-size:19px;line-height:19px;color:#6a9de0;font-weight:bold;width:78px;overflow:hidden">Mdmedmedmedmedmedmedmed</div>
<div class="a" style="left:87px;top:737.1px;width:10px;height:10px;border-radius:50%;background:#d0d0d0"></div>
<div class="a" style="left:116px;top:735.6px;font-size:19px;line-height:19px;color:#6a9de0;font-weight:bold;width:93px;overflow:hidden">Mdmedmedmedmedmedmedmed</div>
<div class="a" style="left:226px;top:735.6px;font-size:19px;line-height:19px;color:#6a9de0;font-weight:bold;width:79px;overflow:hidden">Mdmedmedmedmedmedmedmed</div>
<div class="a" style="left:87px;top:775.3px;width:10px;height:10px;border-radius:50%;background:#d0d0d0"></div>
<div class="a" style="left:116px;top:773.8px;font-size:19px;line-height:19px;color:#6a9de0;font-weight:bold;width:49px;overflow:hidden">Mdmedmedmedmedmedmedmed</div>
<div class="a" style="left:177px;top:773.8px;font-size:19px;line-height:19px;color:#6a9de0;font-weight:bold;width:35px;overflow:hidden">Mdmedmedmedmedmedmedmed</div>
<div class="a" style="left:87px;top:813.5px;width:10px;height:10px;border-radius:50%;background:#d0d0d0"></div>
<div class="a" style="left:116px;top:812.0px;font-size:19px;line-height:19px;color:#6a9de0;font-weight:bold;width:91px;overflow:hidden">Mdmedmedmedmedmedmedmed</div>
<div class="a" style="left:87px;top:851.7px;width:10px;height:10px;border-radius:50%;background:#d0d0d0"></div>
<div class="a" style="left:116px;top:850.2px;font-size:19px;line-height:19px;color:#6a9de0;font-weight:bold;width:21px;overflow:hidden">Mdmedmedmedmedmedmedmed</div>
<div class="a" style="left:148px;top:850.2px;font-size:19px;line-height:19px;color:#6a9de0;font-weight:bold;width:35px;overflow:hidden">Mdmedmedmedmedmedmedmed</div>
<div class="a" style="left:75px;top:568px;width:240px;height:305px;backdrop-filter:blur(7px);-webkit-backdrop-filter:blur(7px)"></div>
<div class="a" style="left:355px;top:571.5px;width:2px;height:302px;background:#808080"></div>
<div class="a" style="left:1762px;top:571.5px;width:2px;height:302px;background:#808080"></div>
</body></html>
